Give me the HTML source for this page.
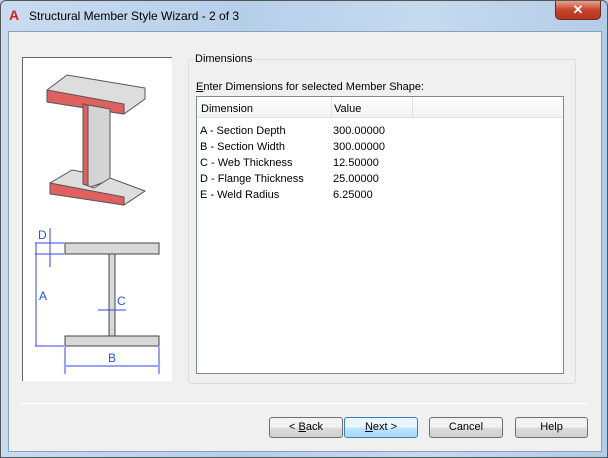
<!DOCTYPE html>
<html><head><style>
*{margin:0;padding:0;box-sizing:border-box}
body{width:608px;height:458px;overflow:hidden;font-family:"Liberation Sans",sans-serif;font-size:11px;color:#000;background:#b9d1ea}
.win{position:absolute;left:0;top:0;width:608px;height:458px;background:linear-gradient(90deg,#c9dcf0,#b6cfe9 40%,#c6daef 70%,#b3cce6);border:1px solid #555;border-radius:6px 6px 0 0}
.title{position:absolute;left:28px;top:8px;font-size:12px;color:#000}
.logo{position:absolute;left:8px;top:6px;color:#d42020;font-weight:bold;font-size:14px}
.close{position:absolute;left:554px;top:0;width:46px;height:19px;background:linear-gradient(#e8a08a,#c8442c 50%,#b8321c);border:1px solid #6b2a20;border-top:none;border-radius:0 0 5px 5px;color:#fff;font-weight:bold;text-align:center;font-size:13px;line-height:17px}
.client{position:absolute;left:7px;top:30px;width:594px;height:421px;background:#f0f0f0;border:1px solid #8aa0b8}
.pic{position:absolute;left:21px;top:56px;width:150px;height:324px;background:#fff;border-left:1px solid #666;border-top:1px solid #666}
.grp{position:absolute;left:187px;top:58px;width:388px;height:325px;border:1px solid #d5dfe5;border-radius:3px}
.gl{position:absolute;left:193px;top:52px;background:#f0f0f0;padding:0 1px}
.lbl{position:absolute;left:195px;top:80px}
.list{position:absolute;left:195px;top:95px;width:368px;height:278px;background:#fff;border:1px solid #828790}
.hdr{position:absolute;left:0;top:0;width:366px;height:21px;background:linear-gradient(#fff,#f3f3f3);border-bottom:1px solid #e5e5e5}
.hdr span{position:absolute;top:6px}
.sep{position:absolute;top:0;width:1px;height:21px;background:#e0e0e0}
.row{position:absolute;left:3px}
.row b{font-weight:normal;position:absolute;left:133px;white-space:nowrap}
.line{position:absolute;left:19px;top:402px;width:568px;height:1px;background:#a0a0a0;border-bottom:1px solid #fff}
.btn{position:absolute;top:416px;height:21px;border:1px solid #707070;border-radius:3px;background:linear-gradient(#f2f2f2 50%,#dddddd 50%,#cfcfcf);text-align:center;line-height:19px}
.btn.d{border-color:#3c7fb1;background:linear-gradient(#eaf6fd 50%,#bee6fd 50%,#a7d9f5)}
</style></head><body>
<div class="win">
<div class="logo">A</div>
<div class="title">Structural Member Style Wizard - 2 of 3</div>
<div class="close">✕</div>
<div class="client"></div>
<div class="pic">
<svg width="150" height="324" viewBox="21 56 150 324">
 <polygon points="45,88 65,73 143,86 143,97 122,112 45,100" fill="#ddd" stroke="#555"/>
 <polygon points="45,88 122,102 122,112 45,100" fill="#e06060" stroke="#555"/>
 <polygon points="81,102 86,103 86,184 81,182" fill="#e06060" stroke="#555"/>
 <polygon points="86,103 108,107 108,178 86,186" fill="#d4d4d4" stroke="#555"/>
 <polygon points="48,181 70,168 81,170 81,182 92,186 108,176 143,189 122,203 48,191" fill="#ddd" stroke="#555"/>
 <polygon points="48,181 122,195 122,203 48,192" fill="#e06060" stroke="#555"/>
 <g stroke="#444" fill="#d8d8d8"><rect x="63" y="241" width="94" height="11"/><rect x="107" y="252" width="6" height="82"/><rect x="63" y="334" width="94" height="10"/></g>
 <g stroke="#3344ee" fill="none" stroke-width="1"><line x1="33" y1="241" x2="62" y2="241"/><line x1="33" y1="344" x2="62" y2="344"/><line x1="34" y1="241" x2="34" y2="344"/><line x1="48" y1="226" x2="48" y2="265"/><line x1="33" y1="252" x2="62" y2="252"/><line x1="96" y1="308" x2="124" y2="308"/><line x1="63" y1="345" x2="63" y2="372"/><line x1="157" y1="345" x2="157" y2="372"/><line x1="64" y1="364" x2="156" y2="364"/></g>
 <g fill="#2255ee" font-size="12" font-family="Liberation Sans"><text x="36" y="237">D</text><text x="37" y="298">A</text><text x="115" y="303">C</text><text x="106" y="360">B</text></g>
</svg>
</div>
<div class="grp"></div>
<div class="gl">Dimensions</div>
<div class="lbl"><u>E</u>nter Dimensions for selected Member Shape:</div>
<div class="list">
 <div class="hdr"><span style="left:4px">Dimension</span><span style="left:137px">Value</span><div class="sep" style="left:134px"></div><div class="sep" style="left:215px"></div></div>
 <div class="row" style="top:28px">A - Section Depth<b>300.00000</b></div>
 <div class="row" style="top:44px">B - Section Width<b>300.00000</b></div>
 <div class="row" style="top:60px">C - Web Thickness<b>12.50000</b></div>
 <div class="row" style="top:76px">D - Flange Thickness<b>25.00000</b></div>
 <div class="row" style="top:92px">E - Weld Radius<b>6.25000</b></div>
</div>
<div class="line"></div>
<div class="btn" style="left:268px;width:74px">&lt; <u>B</u>ack</div>
<div class="btn d" style="left:343px;width:74px"><u>N</u>ext &gt;</div>
<div class="btn" style="left:428px;width:74px">Cancel</div>
<div class="btn" style="left:514px;width:73px">Help</div>
</div>
</body></html>
